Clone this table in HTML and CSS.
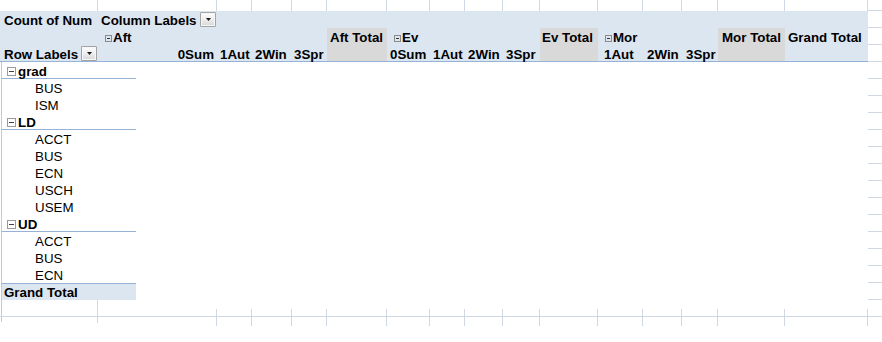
FILE: index.html
```html
<!DOCTYPE html>
<html>
<head>
<meta charset="utf-8">
<link rel="stylesheet" href="styles.css">
</head>
<body>
<div class="sheet">
  <div class="cols top">
    <div></div><div></div><div></div><div></div><div></div><div></div><div></div><div></div><div></div><div></div><div></div><div></div><div></div><div></div><div></div><div></div><div></div>
  </div>
  <div class="mid">
    <div class="main">
      <div class="band">
        <div class="c pl4">Count of Num</div>
        <div class="c pr1">Column Labels<span class="dd"><svg width="5" height="3" viewBox="0 0 5 3"><path d="M0 0h5L2.5 3z" fill="#1a1a1a"/></svg></span></div>
        <div class="c span14"></div>

        <div class="c"></div>
        <div class="c span4"><svg class="cbh" width="7" height="7" viewBox="0 0 7 7"><rect x="0.5" y="0.5" width="6" height="6" fill="none" stroke="#8a8a8a"/><path d="M2 3.5h3" stroke="#333"/></svg>Aft</div>
        <div class="c sub">Aft Total</div>
        <div class="c span4"><svg class="cbh" width="7" height="7" viewBox="0 0 7 7"><rect x="0.5" y="0.5" width="6" height="6" fill="none" stroke="#8a8a8a"/><path d="M2 3.5h3" stroke="#333"/></svg>Ev</div>
        <div class="c sub pl2">Ev Total</div>
        <div class="c span3"><svg class="cbh" width="7" height="7" viewBox="0 0 7 7"><rect x="0.5" y="0.5" width="6" height="6" fill="none" stroke="#8a8a8a"/><path d="M2 3.5h3" stroke="#333"/></svg>Mor</div>
        <div class="c sub pl4">Mor Total</div>
        <div class="c">Grand Total</div>

        <div class="c pl4 pr1">Row Labels<span class="dd"><svg width="5" height="3" viewBox="0 0 5 3"><path d="M0 0h5L2.5 3z" fill="#1a1a1a"/></svg></span></div>
        <div class="c right">0Sum</div>
        <div class="c">1Aut</div>
        <div class="c">2Win</div>
        <div class="c pl2">3Spr</div>
        <div class="c">0Sum</div>
        <div class="c">1Aut</div>
        <div class="c">2Win</div>
        <div class="c">3Spr</div>
        <div class="c pl6">1Aut</div>
        <div class="c pl4">2Win</div>
        <div class="c pl4">3Spr</div>
        <div class="c"></div>
      </div>
      <div class="body">
        <div class="r grp"><svg class="cbb" width="9" height="9" viewBox="0 0 9 9"><rect x="0.5" y="0.5" width="8" height="8" fill="#fff" stroke="#9a9a9a"/><path d="M2 4.5h5" stroke="#404040"/></svg>grad</div>
        <div class="r item">BUS</div>
        <div class="r item">ISM</div>
        <div class="r grp"><svg class="cbb" width="9" height="9" viewBox="0 0 9 9"><rect x="0.5" y="0.5" width="8" height="8" fill="#fff" stroke="#9a9a9a"/><path d="M2 4.5h5" stroke="#404040"/></svg>LD</div>
        <div class="r item">ACCT</div>
        <div class="r item">BUS</div>
        <div class="r item">ECN</div>
        <div class="r item">USCH</div>
        <div class="r item">USEM</div>
        <div class="r grp"><svg class="cbb" width="9" height="9" viewBox="0 0 9 9"><rect x="0.5" y="0.5" width="8" height="8" fill="#fff" stroke="#9a9a9a"/><path d="M2 4.5h5" stroke="#404040"/></svg>UD</div>
        <div class="r item">ACCT</div>
        <div class="r item">BUS</div>
        <div class="r item">ECN</div>
        <div class="r gt">Grand Total</div>
      </div>
    </div>
    <div class="edge">
      <div></div><div></div><div></div><div></div><div></div><div></div><div></div><div></div><div></div><div></div><div></div><div></div><div></div><div></div><div></div><div></div><div></div>
    </div>
  </div>
  <div class="cols tail1">
    <div class="a"></div><div></div><div></div><div></div><div></div><div></div><div></div><div></div><div></div><div></div><div></div><div></div><div></div><div></div><div></div><div></div><div></div>
  </div>
  <div class="cols tail2">
    <div class="a"></div><div></div><div></div><div></div><div></div><div></div><div></div><div></div><div></div><div></div><div></div><div></div><div></div><div></div><div></div><div></div><div></div>
  </div>
</div>
</body>
</html>
```

FILE: styles.css
```css
* { box-sizing: border-box; }

body {
  margin: 0;
  background: #fff;
  color: #000;
  font-family: "Liberation Sans", Arial, sans-serif;
  font-size: 13.33px;
}

.sheet { width: 882px; }

.cols {
  display: grid;
  grid-template-columns: 98px 119px 35px 40px 35px 60px 43px 35px 38px 37px 58px 45px 39px 36px 67px 83px 14px;
}

.top { height: 11px; }
.top > div { border-right: 1px solid #d0d7e5; }
.top > div:last-child { border-right: 0; border-bottom: 1px solid #d0d7e5; }

.mid { display: flex; }
.main { width: 868px; }
.edge { width: 14px; }
.edge > div { height: 17px; border-bottom: 1px solid #d0d7e5; }

.band {
  display: grid;
  grid-template-columns: 98px 119px 35px 40px 35px 60px 43px 35px 38px 37px 58px 45px 39px 36px 67px 83px;
  grid-template-rows: 17px 17px 16px;
  background: #dce6f1;
  border-bottom: 1px solid #95b3d7;
}

.c {
  display: flex;
  align-items: flex-start;
  line-height: 19px;
  white-space: nowrap;
  padding-left: 3px;
  font-weight: bold;
  min-width: 0;
}

.pl2 { padding-left: 2px; }
.pl4 { padding-left: 4px; }
.pl6 { padding-left: 6px; }
.pr1 { padding-right: 1px; }
.right { justify-content: flex-end; padding-right: 3px; }
.span3 { grid-column: span 3; }
.span4 { grid-column: span 4; }
.span14 { grid-column: span 14; }
.sub { background: #d9d9d9; grid-row: span 2; }

.dd {
  margin-left: auto;
  margin-top: 1px;
  width: 16px;
  height: 15px;
  border: 1px solid #a3a3a3;
  border-radius: 1px;
  background: linear-gradient(#fdfdfd, #ececec 55%, #d6d6d6);
  box-shadow: inset 0 0 0 1px #f7f7f7;
  display: flex;
  align-items: center;
  justify-content: center;
}

.cbh { flex: none; margin: 7px 1px 0 4px; }
.cbb { flex: none; margin: 5px 2px 0 0; }

.body { padding-left: 1px; }

.r {
  width: 135px;
  height: 17px;
  border-left: 1px solid #b8cce4;
  display: flex;
  align-items: flex-start;
  line-height: 19px;
  white-space: nowrap;
}

.item { padding-left: 33px; }
.grp { font-weight: bold; padding-left: 5px; border-bottom: 1px solid #95b3d7; }
.gt {
  font-weight: bold;
  padding-left: 2px;
  line-height: 17px;
  background: #dce6f1;
  border-top: 1px solid #95b3d7;
}

.tail1 { height: 17px; border-bottom: 1px solid #d0d7e5; }
.tail1 > div {
  background: linear-gradient(#d0d7e5, #d0d7e5) no-repeat right bottom / 1px 7px;
}
.tail1 > .a {
  background:
    linear-gradient(#b8cce4, #b8cce4) no-repeat 1px 0 / 1px 100%,
    linear-gradient(#d0d7e5, #d0d7e5) no-repeat right top / 1px 100%;
}
.tail1 > div:last-child { background: none; }

.tail2 { height: 25px; }
.tail2 > div {
  background: linear-gradient(#d0d7e5, #d0d7e5) no-repeat right top / 1px 9px;
}
.tail2 > .a {
  background:
    linear-gradient(#b8cce4, #b8cce4) no-repeat 1px 0 / 1px 5px,
    linear-gradient(#d0d7e5, #d0d7e5) no-repeat right top / 1px 6px;
}
.tail2 > div:last-child { background: none; }
```
